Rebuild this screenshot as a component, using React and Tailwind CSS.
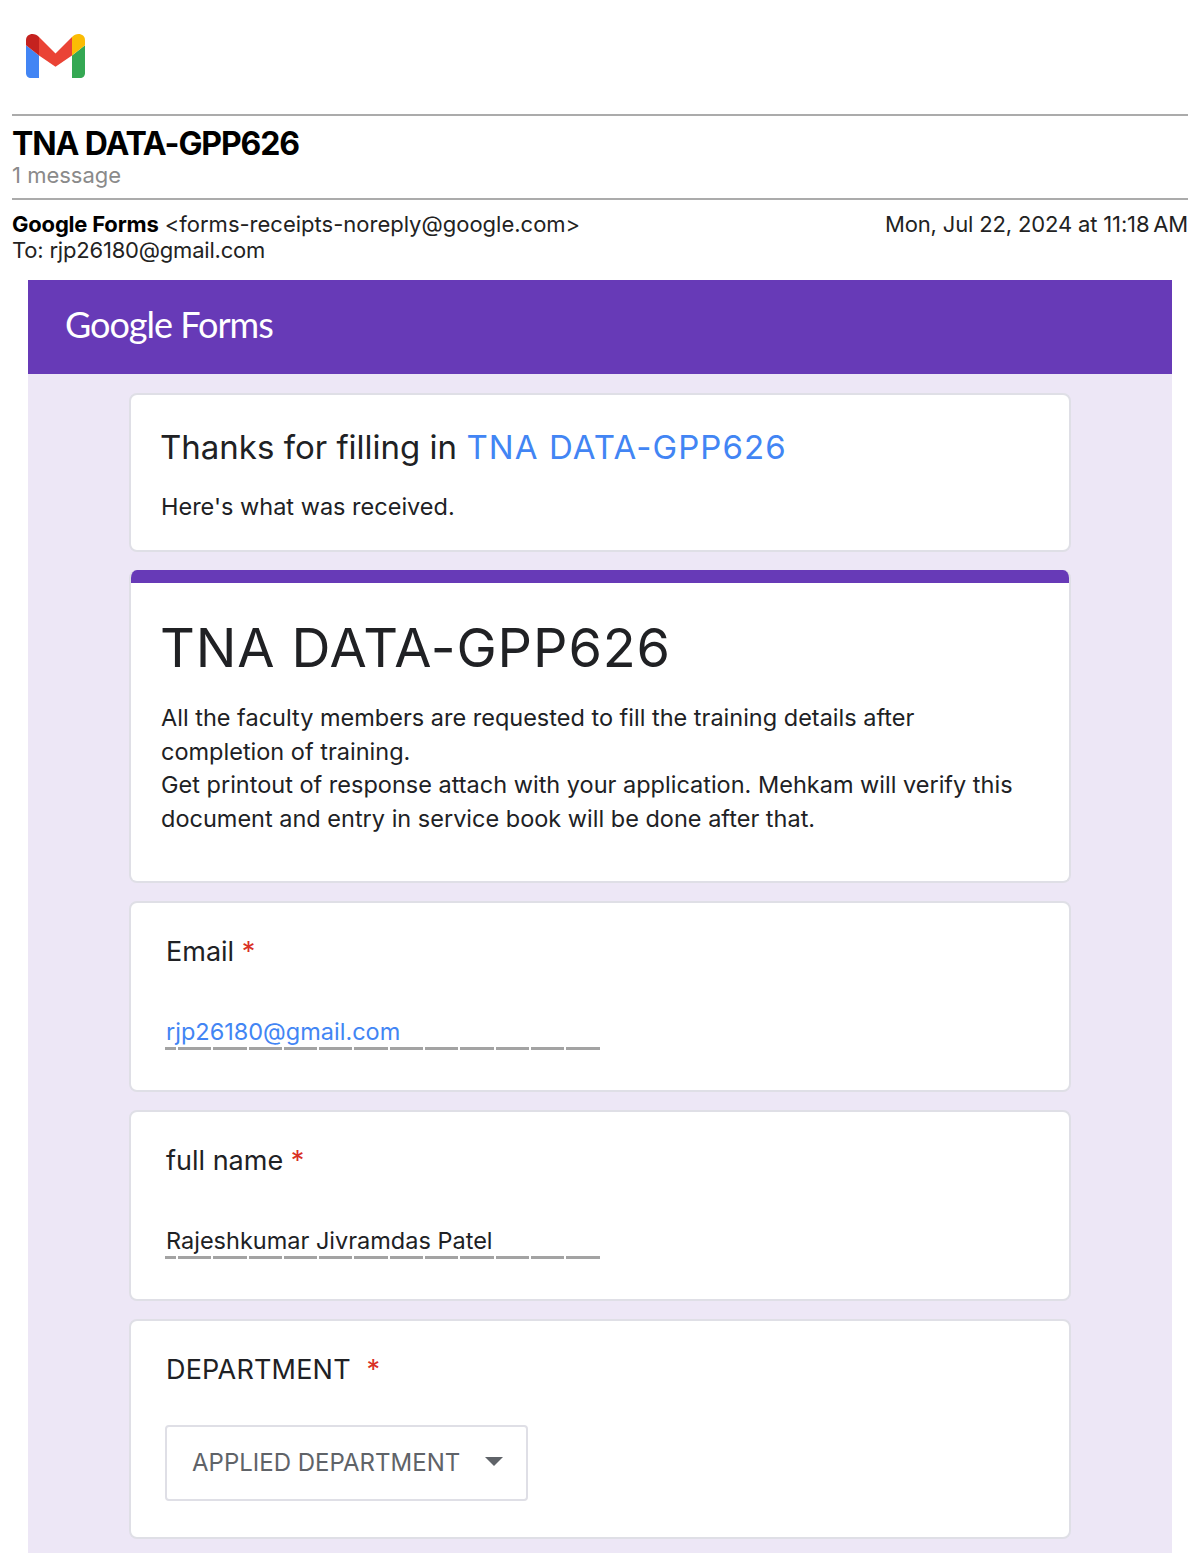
const GmailLogo = () => (
  <svg width="59" height="45" viewBox="0 0 59 44" preserveAspectRatio="none" fill="none">
    <path d="M0 12L13 22V44H5C2 44 0 42 0 39Z" fill="#4285F4" />
    <path d="M46 22L59 12V39C59 42 57 44 54 44H46Z" fill="#34A853" />
    <path d="M13 4L29.5 20L46 4V22L29.5 33L13 22Z" fill="#EA4335" />
    <path d="M46 22V4C50 -1 59 0 59 7V12Z" fill="#FBBC04" />
    <path d="M0 7C0 0 9 -1 13 4V22L0 12Z" fill="#C5221F" />
  </svg>
);

const Asterisk = ({ className }) => <span className={`text-[#d93025] ${className || ''}`}>*</span>;

const DashedLine = () => (
  <div className="flex w-[435px] gap-[2px]">
    <span className="h-[3px] w-[11px] bg-[#a3a3a3]" />
    {Array.from({ length: 12 }).map((_, i) => (
      <span key={i} className="h-[3px] w-[33.3px] bg-[#a3a3a3]" />
    ))}
  </div>
);

const Card = ({ className, children }) => (
  <div className={`w-[942px] rounded-[8px] border-2 border-[#dfdfe6] bg-white ${className || ''}`}>
    {children}
  </div>
);

const TextField = ({ label, value, valueClass }) => (
  <Card className="h-[191px] pl-[34px] pt-[31px]">
    <div className="ml-[1px] text-[27px] leading-[36px] text-[#202124]">
      {label} <Asterisk />
    </div>
    <div className={`ml-[1px] mt-[47px] text-[23.5px] leading-[30px] ${valueClass}`}>{value}</div>
    <DashedLine />
  </Card>
);

export default function App() {
  return (
    <div className="h-[1553px] overflow-hidden bg-white px-[12px] font-['Inter',sans-serif]">
      <div className="pl-[14px] pt-[33px]">
        <GmailLogo />
      </div>

      <div className="mt-[36px] border-t-2 border-[#ababab]" />
      <h1 className="mt-[10px] text-[32px] font-bold leading-[35px] tracking-[-1.1px] text-black">TNA DATA-GPP626</h1>
      <div className="text-[22px] leading-[28px] text-[#8a8a8a]">1 message</div>
      <div className="mt-[9px] border-t-2 border-[#ababab]" />

      <div className="mt-[11px] flex justify-between text-[22px] leading-[26px] text-[#222]">
        <div>
          <b className="tracking-[-0.2px] text-black">Google Forms</b> &lt;forms-receipts-noreply@google.com&gt;
        </div>
        <div className="tracking-[-0.15px]">Mon, Jul 22, 2024 at 11:18{'\u202F'}AM</div>
      </div>
      <div className="text-[22px] leading-[26px] tracking-[-0.2px] text-[#222]">To: rjp26180@gmail.com</div>

      <div className="mx-[16px] mt-[17px] h-[1300px] bg-[#ede7f6]">
        <div className="flex h-[94px] items-center bg-[#673ab7] pb-[7px] pl-[37px] font-['Lato',sans-serif] text-[36px] tracking-[-1px] text-white">
          Google Forms
        </div>

        <div className="flex flex-col items-center gap-[18px] pt-[19px]">
          <Card className="h-[159px] pl-[29px] pt-[30px]">
            <div className="text-[33px] leading-[44px] text-[#202124]">
              Thanks for filling in <span className="tracking-[1.1px] text-[#4285f4]">TNA DATA-GPP626</span>
            </div>
            <div className="ml-[1px] mt-[21px] text-[23.5px] leading-[34px] text-[#202124]">Here's what was received.</div>
          </Card>

          <Card className="h-[313px] overflow-hidden border-t-0">
            <div className="h-[13px] bg-[#673ab7]" />
            <div className="pl-[29px] pr-[40px] pt-[30px]">
              <div className="text-[54px] leading-[70px] tracking-[0.9px] text-[#202124]">TNA DATA-GPP626</div>
              <div className="ml-[1px] mt-[18px] text-[23.5px] leading-[33.5px] text-[#202124]">
                All the faculty members are requested to fill the training details after completion of training.
                <br />
                Get printout of response attach with your application. Mehkam will verify this document and entry in
                service book will be done after that.
              </div>
            </div>
          </Card>

          <TextField label="Email" value="rjp26180@gmail.com" valueClass="text-[#4285f4]" />
          <TextField label="full name" value="Rajeshkumar Jivramdas Patel" valueClass="text-[#202124]" />

          <Card className="h-[220px] pl-[34px] pt-[31px]">
            <div className="ml-[1px] text-[27px] leading-[36px] tracking-[0.2px] text-[#202124]">
              DEPARTMENT <Asterisk className="ml-[8px]" />
            </div>
            <div className="mt-[37px] flex h-[76px] w-[363px] items-center justify-between rounded-[4px] border-2 border-[#dfdfe6] pl-[25px] pr-[23px] text-[24px] text-[#5f6368]">
              APPLIED DEPARTMENT
              <span className="mb-[4px] h-0 w-0 border-x-[9px] border-t-[9px] border-x-transparent border-t-[#5f6368]" />
            </div>
          </Card>
        </div>
      </div>
    </div>
  );
}
